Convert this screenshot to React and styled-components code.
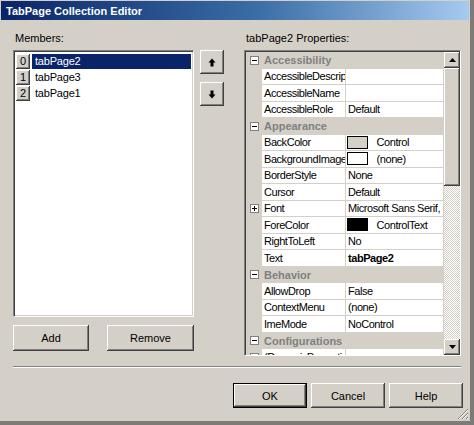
import React from 'react';
import styled, { createGlobalStyle, css } from 'styled-components';

const GlobalStyle = createGlobalStyle`
  body {
    margin: 0;
    font-family: "Liberation Sans", Arial, sans-serif;
    font-size: 11px;
    color: #000;
    background: #d4d0c8;
  }
`;

const raised = css`
  box-shadow: inset -1px -1px #404040, inset 1px 1px #ffffff,
    inset -2px -2px #808080, inset 2px 2px #d4d0c8;
`;

const Window = styled.div`
  position: relative;
  width: 474px;
  height: 425px;
  box-sizing: border-box;
  background: #d4d0c8;
  border-right: 4px solid #7c7b77;
  border-bottom: 4px solid #7c7b77;
  padding: 1px 0 0 1px;
  display: flex;
  flex-direction: column;
`;

const TitleBar = styled.div`
  height: 19px;
  margin-right: 1px;
  background: linear-gradient(to right, #0a246a 0%, #3a6ea5 55%, #a6caf0 100%);
  color: #fff;
  font-weight: bold;
  font-size: 11px;
  display: flex;
  align-items: center;
  padding-left: 5px;
`;

const Body = styled.div`
  padding: 10px 9px 0 12px;
  display: flex;
  gap: 20px;
`;

const Column = styled.div`
  display: flex;
  flex-direction: column;
`;

const Label = styled.div`
  height: 16px;
  line-height: 16px;
  margin-bottom: 4px;
  padding-left: ${p => p.$indent || 1}px;
`;

const ListRow = styled.div`
  display: flex;
  gap: 6px;
`;

const ListBox = styled.div`
  width: 181px;
  height: 267px;
  box-sizing: border-box;
  background: #fff;
  border: 1px solid;
  border-color: #808080 #fff #fff #808080;
  box-shadow: inset 1px 1px #404040, inset -1px -1px #d4d0c8;
  padding: 2px 2px 0 2px;
`;

const Item = styled.div`
  display: flex;
  align-items: center;
  height: 16px;
`;

const Index = styled.span`
  width: 14px;
  height: 15px;
  box-sizing: border-box;
  background: #d4d0c8;
  ${raised};
  display: flex;
  align-items: center;
  justify-content: center;
  font-size: 11px;
  margin-right: 2px;
`;

const ItemText = styled.span`
  flex: 1;
  height: 15px;
  line-height: 15px;
  padding-left: 3px;
  letter-spacing: -0.2px;
  background: ${p => (p.$selected ? '#0a246a' : 'transparent')};
  color: ${p => (p.$selected ? '#fff' : '#000')};
`;

const ArrowCol = styled.div`
  display: flex;
  flex-direction: column;
  gap: 8px;
`;

const Button = styled.button`
  font-family: "Liberation Sans", Arial, sans-serif;
  font-size: 11px;
  color: #000;
  background: #d4d0c8;
  border: none;
  padding: 0;
  width: ${p => p.$w}px;
  height: ${p => p.$h}px;
  display: flex;
  align-items: center;
  justify-content: center;
  ${raised};
  ${p =>
    p.$default &&
    css`
      box-shadow: inset 0 0 0 1px #000, inset -2px -2px #404040,
        inset 2px 2px #ffffff, inset -3px -3px #808080;
    `}
`;

const ButtonRow = styled.div`
  display: flex;
  gap: 18px;
  margin-top: 8px;
`;

const Grid = styled.div`
  width: 217px;
  height: 306px;
  box-sizing: border-box;
  border: 1px solid;
  border-color: #808080 #fff #fff #808080;
  box-shadow: inset 1px 1px #404040;
  padding: 1px 0 0 1px;
  display: flex;
  background: #d4d0c8;
`;

const Rows = styled.div`
  flex: 1;
  overflow: hidden;
`;

const Row = styled.div`
  display: grid;
  grid-template-columns: 16px 84px 1fr;
  height: 16.5px;
  box-sizing: border-box;
`;

const Margin = styled.div`
  display: flex;
  align-items: center;
  justify-content: center;
  background: #d4d0c8;
`;

const Cell = styled.div`
  background: #fff;
  border-bottom: 1px solid #d4d0c8;
  border-right: 1px solid #d4d0c8;
  display: flex;
  align-items: center;
  gap: 6px;
  padding-left: ${p => p.$pad ?? 2}px;
  white-space: nowrap;
  overflow: hidden;
  letter-spacing: -0.45px;
  font-weight: ${p => (p.$bold ? 'bold' : 'normal')};
`;

const Category = styled.div`
  grid-column: 2 / 4;
  background: #d4d0c8;
  color: #808080;
  font-weight: bold;
  display: flex;
  align-items: center;
  padding-left: 2px;
`;

const Swatch = styled.span`
  width: 19px;
  height: 11px;
  border: 1px solid #000;
  background: ${p => p.$color};
  flex: none;
`;

const ScrollBar = styled.div`
  width: 16px;
  display: flex;
  flex-direction: column;
  background-color: #ecebe6;
  background-image: repeating-conic-gradient(#ffffff 0 25%, #d4d0c8 0 50%);
  background-size: 2px 2px;
`;

const ScrollBtn = styled.div`
  width: 16px;
  height: 16px;
  box-sizing: border-box;
  background: #d4d0c8;
  ${raised};
  display: flex;
  align-items: center;
  justify-content: center;
  flex: none;
`;

const Thumb = styled.div`
  width: 16px;
  height: 118px;
  background: #d4d0c8;
  ${raised};
  flex: none;
`;

const Spacer = styled.div`
  flex: 1;
`;

const Separator = styled.div`
  margin: 10px 9px 0 12px;
  border-top: 1px solid #808080;
  border-bottom: 1px solid #fff;
`;

const Footer = styled.div`
  display: flex;
  justify-content: flex-end;
  gap: 4px;
  padding: 15px 7px 0 0;
`;

const Grip = styled.svg`
  position: absolute;
  right: 1px;
  bottom: 1px;
`;

const Toggle = ({ open }) => (
  <svg width="9" height="9" viewBox="0 0 9 9">
    <rect x="0.5" y="0.5" width="8" height="8" fill="#fff" stroke="#808080" />
    <path d="M2 4.5h5" stroke="#000" />
    {!open && <path d="M4.5 2v5" stroke="#000" />}
  </svg>
);

const Arrow = ({ down }) => (
  <svg width="8" height="9" viewBox="0 0 8 9">
    <g transform={down ? 'rotate(180 4 4.5)' : undefined}>
      <path d="M4 0.5L7.5 4.5H0.5Z" fill="#000" />
      <rect x="2.5" y="4" width="3" height="4.5" fill="#000" />
    </g>
  </svg>
);

const Tri = ({ down }) => (
  <svg width="7" height="4" viewBox="0 0 7 4">
    <path d={down ? 'M0 0h7L3.5 4Z' : 'M3.5 0L7 4H0Z'} fill="#000" />
  </svg>
);

const members = ['tabPage2', 'tabPage3', 'tabPage1'];

const props = [
  { cat: 'Accessibility' },
  { name: 'AccessibleDescrip', value: '' },
  { name: 'AccessibleName', value: '' },
  { name: 'AccessibleRole', value: 'Default' },
  { cat: 'Appearance' },
  { name: 'BackColor', value: 'Control', swatch: '#d4d0c8' },
  { name: 'BackgroundImage', value: '(none)', swatch: '#fff' },
  { name: 'BorderStyle', value: 'None' },
  { name: 'Cursor', value: 'Default' },
  { name: 'Font', value: 'Microsoft Sans Serif,', expand: true },
  { name: 'ForeColor', value: 'ControlText', swatch: '#000' },
  { name: 'RightToLeft', value: 'No' },
  { name: 'Text', value: 'tabPage2', bold: true },
  { cat: 'Behavior' },
  { name: 'AllowDrop', value: 'False' },
  { name: 'ContextMenu', value: '(none)' },
  { name: 'ImeMode', value: 'NoControl' },
  { cat: 'Configurations' },
  { name: '(DynamicProperti', value: '', expand: true },
];

export default function App() {
  return (
    <>
      <GlobalStyle />
      <Window>
        <TitleBar>TabPage Collection Editor</TitleBar>
        <Body>
          <Column>
            <Label $indent={2}>Members:</Label>
            <ListRow>
              <ListBox>
                {members.map((m, i) => (
                  <Item key={m}>
                    <Index>{i}</Index>
                    <ItemText $selected={i === 0}>{m}</ItemText>
                  </Item>
                ))}
              </ListBox>
              <ArrowCol>
                <Button $w={24} $h={24}><Arrow /></Button>
                <Button $w={24} $h={24}><Arrow down /></Button>
              </ArrowCol>
            </ListRow>
            <ButtonRow>
              <Button $w={76} $h={26}>Add</Button>
              <Button $w={87} $h={26}>Remove</Button>
            </ButtonRow>
          </Column>
          <Column>
            <Label $indent={2}>tabPage2 Properties:</Label>
            <Grid>
              <Rows>
                {props.map((p, i) =>
                  p.cat ? (
                    <Row key={i}>
                      <Margin><Toggle open /></Margin>
                      <Category>{p.cat}</Category>
                    </Row>
                  ) : (
                    <Row key={i}>
                      <Margin>{p.expand && <Toggle />}</Margin>
                      <Cell>{p.name}</Cell>
                      <Cell $bold={p.bold} $pad={p.swatch ? 1 : 2}>
                        {p.swatch && <Swatch $color={p.swatch} />}
                        <span>{p.swatch ? '\u00a0' + p.value : p.value}</span>
                      </Cell>
                    </Row>
                  )
                )}
              </Rows>
              <ScrollBar>
                <ScrollBtn><Tri /></ScrollBtn>
                <Thumb />
                <Spacer />
                <ScrollBtn><Tri down /></ScrollBtn>
              </ScrollBar>
            </Grid>
          </Column>
        </Body>
        <Separator />
        <Footer>
          <Button $w={74} $h={25} $default>OK</Button>
          <Button $w={74} $h={25}>Cancel</Button>
          <Button $w={74} $h={25}>Help</Button>
        </Footer>
        <Grip width="12" height="12" viewBox="0 0 12 12">
          <path d="M11 1L1 11M11 5L5 11M11 9L9 11" stroke="#808080" strokeWidth="1" />
          <path d="M11 2L2 11M11 6L6 11M11 10L10 11" stroke="#fff" strokeWidth="1" />
        </Grip>
      </Window>
    </>
  );
}
